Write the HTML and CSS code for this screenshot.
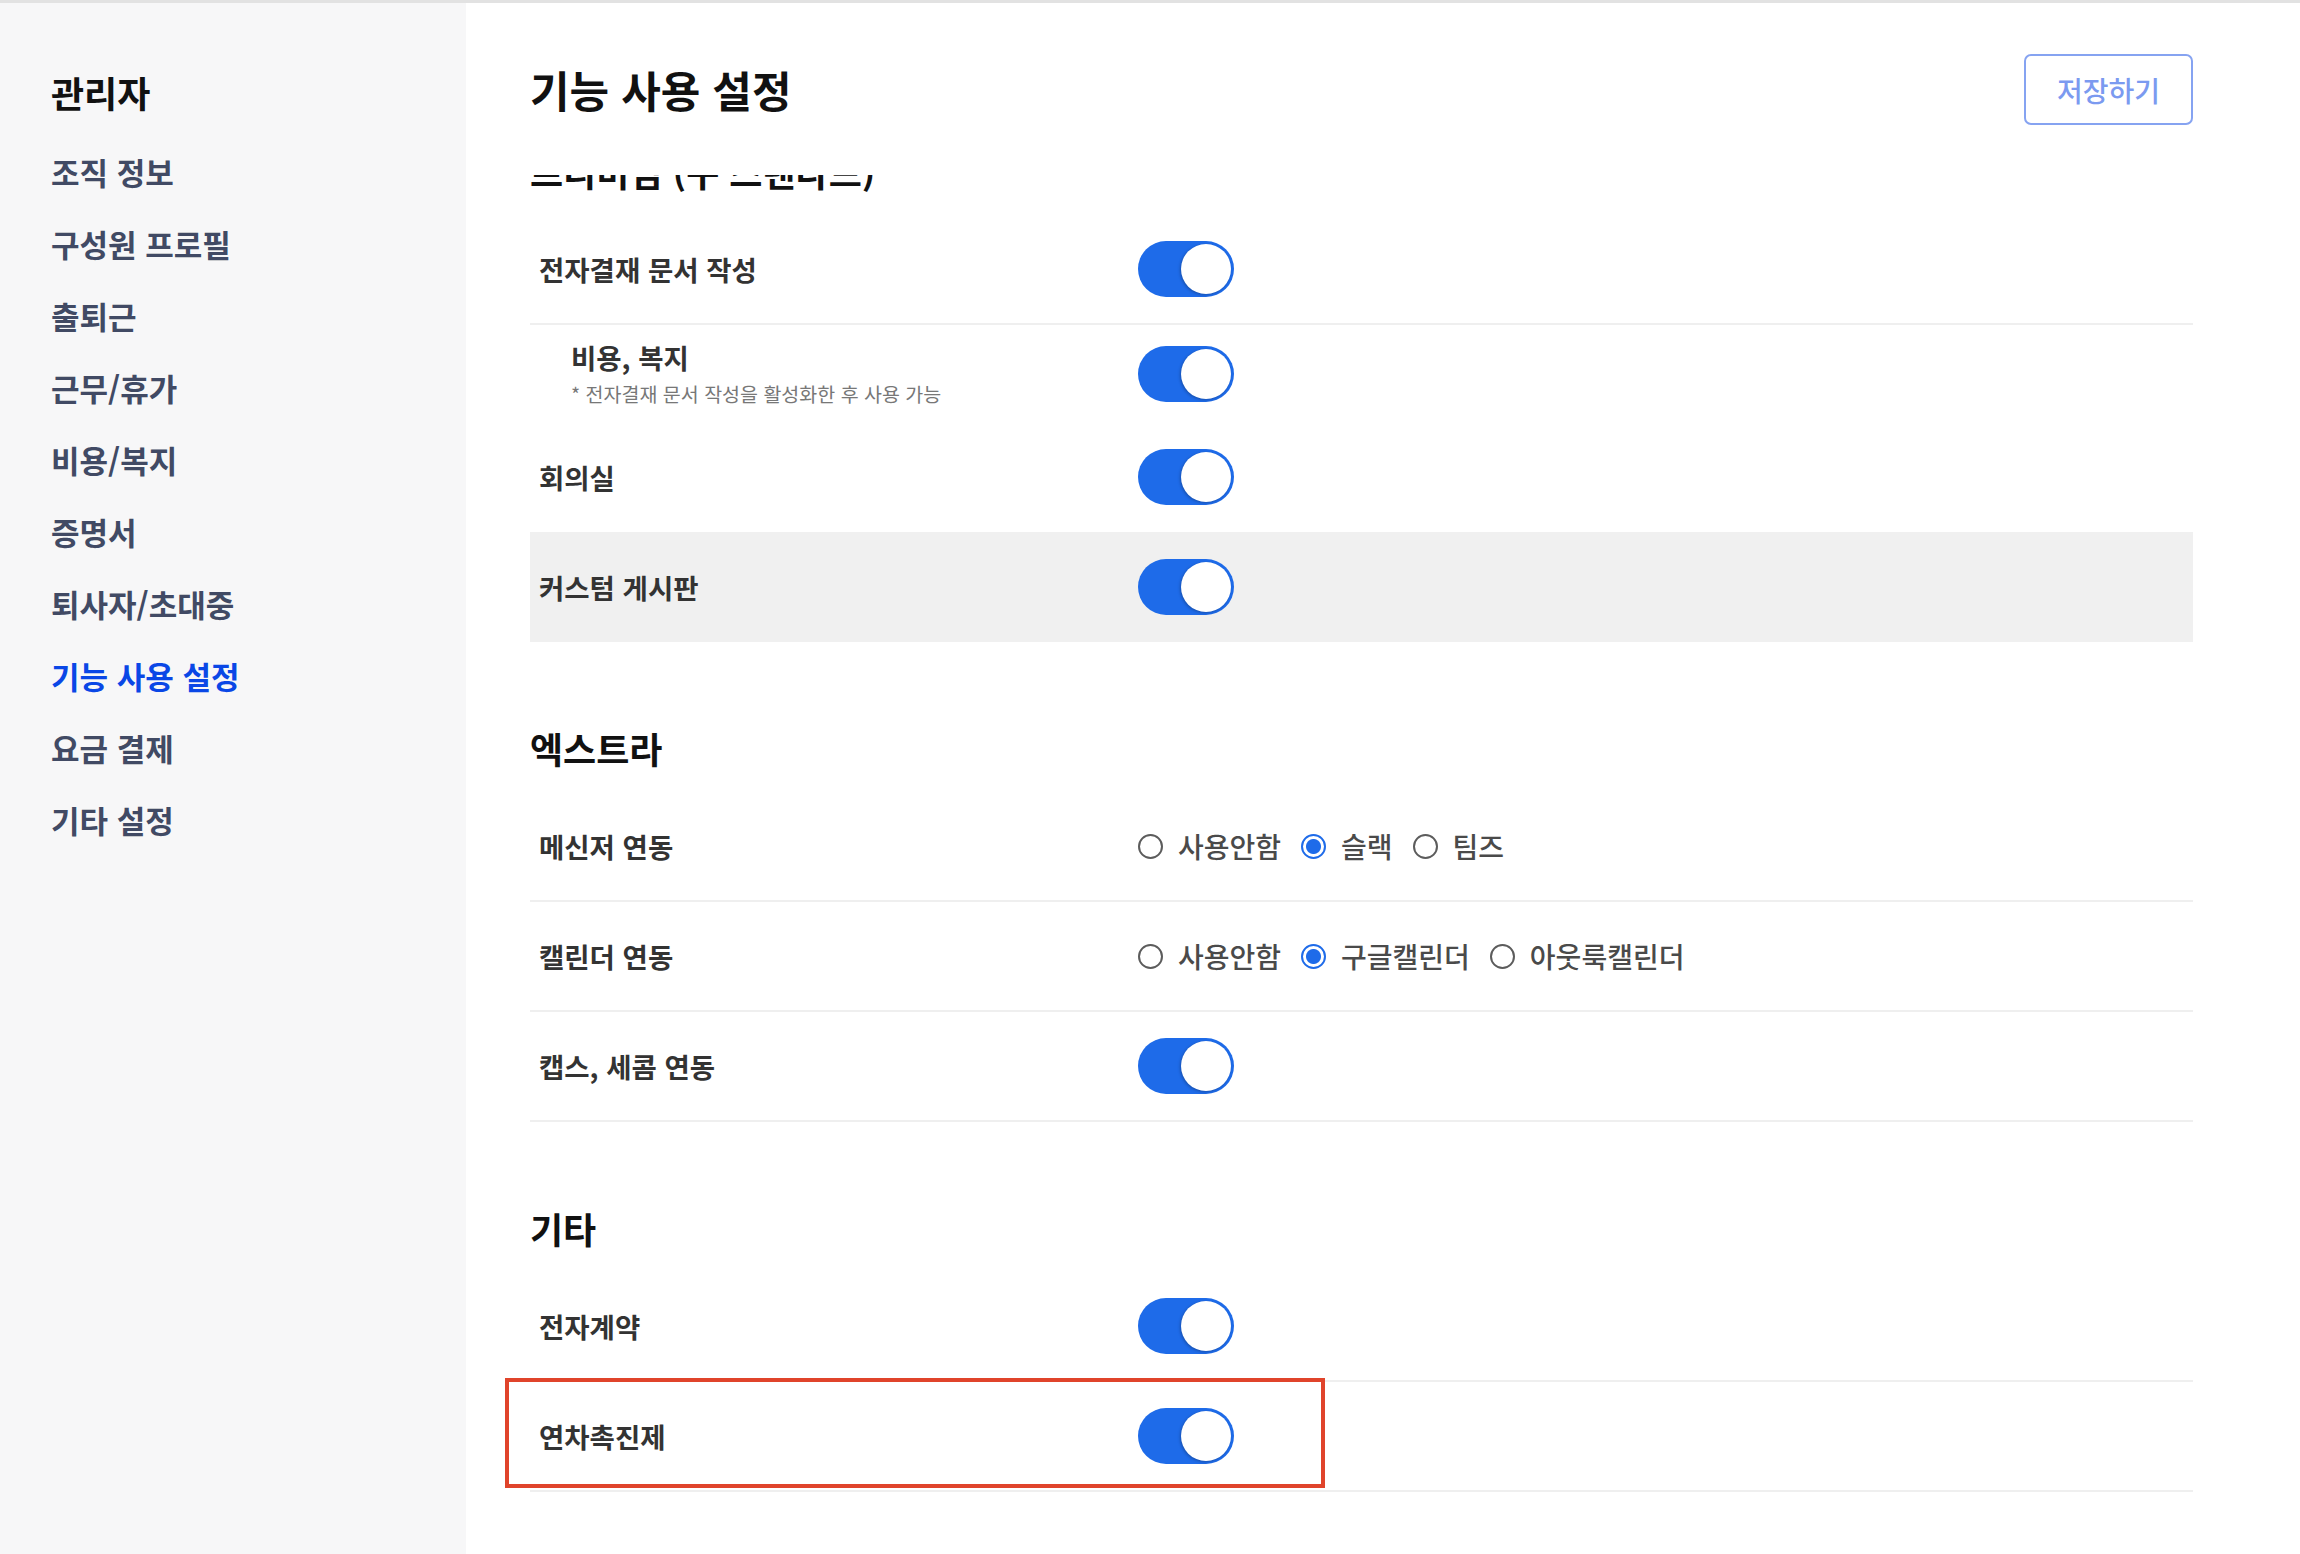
FILE: index.html
```html
<!DOCTYPE html>
<html lang="ko">
<head>
  <meta charset="UTF-8">
  <title>기능 사용 설정</title>
  <link rel="stylesheet" href="styles.css">
</head>
<body>

<div class="topline"></div>

<div class="layout">
  <aside class="sidebar">
    <h1 class="side-title">관리자</h1>
    <ul class="menu">
      <li>조직 정보</li>
      <li>구성원 프로필</li>
      <li>출퇴근</li>
      <li>근무/휴가</li>
      <li>비용/복지</li>
      <li>증명서</li>
      <li>퇴사자/초대중</li>
      <li class="active">기능 사용 설정</li>
      <li>요금 결제</li>
      <li>기타 설정</li>
    </ul>
  </aside>

  <main class="main">
    <header class="main-head">
      <h1 class="page-title">기능 사용 설정</h1>
      <button class="save-btn">저장하기</button>
    </header>

    <div class="scroll">
      <div class="content">

        <section class="section">
          <h2 class="section-title">프리미엄 (구 스탠다드)</h2>
          <div class="row">
            <div class="row-label">전자결재 문서 작성</div>
            <span class="toggle on"></span>
          </div>
          <div class="row sub plain">
            <div class="row-label">
              비용, 복지
              <div class="note">* 전자결재 문서 작성을 활성화한 후 사용 가능</div>
            </div>
            <span class="toggle on"></span>
          </div>
          <div class="row plain">
            <div class="row-label">회의실</div>
            <span class="toggle on"></span>
          </div>
          <div class="row plain shaded">
            <div class="row-label">커스텀 게시판</div>
            <span class="toggle on"></span>
          </div>
        </section>

        <section class="section">
          <h2 class="section-title">엑스트라</h2>
          <div class="row">
            <div class="row-label">메신저 연동</div>
            <div class="radios">
              <label class="opt"><input type="radio" class="radio" name="msg">사용안함</label>
              <label class="opt"><input type="radio" class="radio" name="msg" checked>슬랙</label>
              <label class="opt"><input type="radio" class="radio" name="msg">팀즈</label>
            </div>
          </div>
          <div class="row">
            <div class="row-label">캘린더 연동</div>
            <div class="radios">
              <label class="opt"><input type="radio" class="radio" name="cal">사용안함</label>
              <label class="opt"><input type="radio" class="radio" name="cal" checked>구글캘린더</label>
              <label class="opt"><input type="radio" class="radio" name="cal">아웃룩캘린더</label>
            </div>
          </div>
          <div class="row">
            <div class="row-label">캡스, 세콤 연동</div>
            <span class="toggle on"></span>
          </div>
        </section>

        <section class="section">
          <h2 class="section-title">기타</h2>
          <div class="row">
            <div class="row-label">전자계약</div>
            <span class="toggle on"></span>
          </div>
          <div class="row marked">
            <div class="row-label">연차촉진제</div>
            <span class="toggle on"></span>
            <div class="highlight"></div>
          </div>
        </section>

      </div>
    </div>
  </main>
</div>

</body>
</html>
```

FILE: styles.css
```css
* {
  box-sizing: border-box;
}
body {
  margin: 0;
  font-family: "Noto Sans CJK KR", "Noto Sans", sans-serif;
  color: #333;
  background-color: #fff;
}
.topline {
  height: 3px;
  background-color: #e2e2e2;
}
.layout {
  display: flex;
  height: calc(100vh - 3px);
}

/* sidebar */
.sidebar {
  width: 466px;
  flex-shrink: 0;
  background-color: #f7f7f8;
  padding: 69px 0 0 51px;
}
.side-title {
  margin: 0;
  font-size: 36px;
  line-height: 40px;
  font-weight: 700;
  color: #111;
}
.menu {
  list-style: none;
  margin: 24px 0 0;
  padding: 0;
}
.menu li {
  font-size: 31px;
  line-height: 72px;
  font-weight: 600;
  color: #414a64;
}
.menu li.active {
  color: #0a47e6;
}

/* main */
.main {
  flex: 1;
  display: flex;
  flex-direction: column;
  padding: 0 107px 0 64px;
  min-width: 0;
}
.main-head {
  height: 172px;
  flex-shrink: 0;
  display: flex;
  justify-content: space-between;
  align-items: flex-start;
  padding-top: 51px;
}
.page-title {
  margin: 0;
  font-size: 43px;
  line-height: 71px;
  font-weight: 700;
  color: #111;
}
.save-btn {
  width: 169px;
  height: 71px;
  border: 2px solid #86a3f1;
  border-radius: 7px;
  background-color: #fff;
  color: #7b9af0;
  font-family: inherit;
  font-size: 28px;
  font-weight: 500;
}
.scroll {
  flex: 1;
  overflow: hidden;
  margin-left: -40px;
  padding-left: 40px;
}
.content {
  margin-top: -24px;
}

.section + .section {
  margin-top: 86px;
}
.section-title {
  margin: 0 0 24px;
  font-size: 36px;
  line-height: 40px;
  font-weight: 700;
  color: #111;
}

/* rows */
.row {
  position: relative;
  display: flex;
  align-items: center;
  height: 110px;
  padding-left: 9px;
  border-bottom: 2px solid #efefef;
}
.row.plain {
  border-bottom: none;
}
.row.sub {
  height: 97px;
  padding-left: 41px;
}
.row.shaded {
  background-color: #f0f0f0;
}
.row-label {
  width: 599px;
  flex-shrink: 0;
  font-size: 27.5px;
  font-weight: 600;
  color: #333;
}
.row.sub .row-label {
  width: 567px;
  margin-top: -2px;
}
.note {
  font-size: 19.5px;
  font-weight: 400;
  color: #777;
  margin-top: 2px;
}

.toggle {
  position: relative;
  width: 96px;
  height: 56px;
  border-radius: 28px;
  background-color: #ccc;
}
.toggle.on {
  background-color: #1e6be9;
}
.toggle::after {
  content: "";
  position: absolute;
  top: 3px;
  left: 3px;
  width: 50px;
  height: 50px;
  border-radius: 50%;
  background-color: #fff;
  box-shadow: -1px 1px 3px rgba(0, 0, 0, 0.25);
}
.toggle.on::after {
  left: 43px;
}

.radios {
  display: flex;
  align-items: center;
  gap: 20px;
}
.opt {
  display: flex;
  align-items: center;
  gap: 15px;
  font-size: 28px;
  font-weight: 500;
  color: #4a4a4a;
}
.radio {
  appearance: none;
  -webkit-appearance: none;
  width: 25px;
  height: 25px;
  margin: 0;
  border: 2px solid #5c5c5c;
  border-radius: 50%;
  background-color: #fff;
}
.radio:checked {
  border-color: #1e6be9;
  background: radial-gradient(circle, #1e6be9 0 7px, #fff 8px);
}

.highlight {
  position: absolute;
  top: -4px;
  left: -25px;
  width: 820px;
  height: 110px;
  border: 4px solid #e0442b;
}
```
